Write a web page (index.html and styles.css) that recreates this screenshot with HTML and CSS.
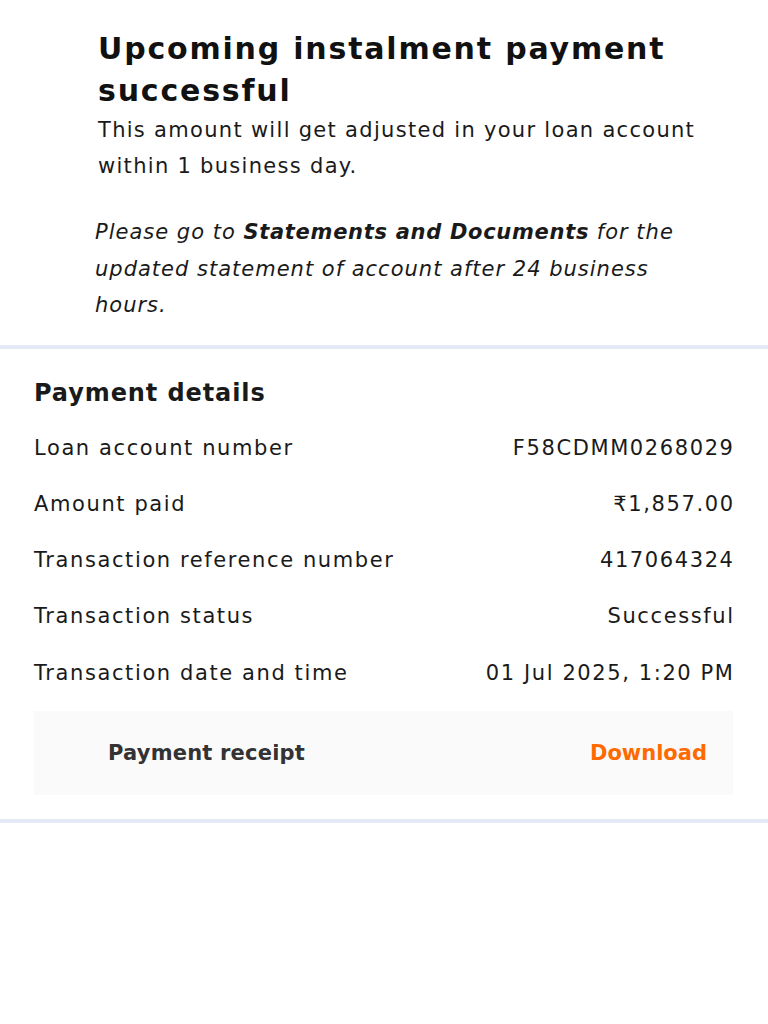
FILE: index.html
```html
<!DOCTYPE html>
<html>
<head>
<meta charset="utf-8">
<link rel="stylesheet" href="styles.css">
</head>
<body>
<section class="top">
  <h1 class="title">Upcoming instalment payment successful</h1>
  <p class="sub">This amount will get adjusted in your loan account within 1 business day.</p>
  <p class="note">Please go to <b>Statements and Documents</b> for the updated statement of account after 24 business hours.</p>
</section>
<div class="divider"></div>
<section class="details">
  <h2 class="heading">Payment details</h2>
  <div class="row"><span>Loan account number</span><span>F58CDMM0268029</span></div>
  <div class="row"><span>Amount paid</span><span>₹1,857.00</span></div>
  <div class="row"><span>Transaction reference number</span><span>417064324</span></div>
  <div class="row"><span>Transaction status</span><span>Successful</span></div>
  <div class="row"><span>Transaction date and time</span><span>01 Jul 2025, 1:20 PM</span></div>
  <div class="receipt"><span class="rlabel">Payment receipt</span><span class="dl">Download</span></div>
</section>
<div class="divider"></div>
</body>
</html>
```
FILE: styles.css
```css
html, body { margin: 0; padding: 0; background: #fff; }
body { font-family: "DejaVu Sans", Inter, sans-serif; color: #1a1a1a; width: 768px; }
.top { padding: 28px 50px 21px 95px; }
.title { margin: 0 0 0 3px; font-size: 30px; line-height: 42px; font-weight: 700; letter-spacing: 1.8px; color: #111; }
.sub { margin: 0 0 0 3px; font-size: 21px; line-height: 36px; letter-spacing: 1.3px; color: #1a1a1a; }
.note { margin: 30px 0 0 0; font-size: 21px; line-height: 36.5px; font-style: italic; letter-spacing: 1px; color: #1a1a1a; }
.note b { font-weight: 700; letter-spacing: 0.7px; }
.divider { height: 4px; background: #e4e9f5; }
.details { padding: 24px 35px 24px 34px; }
.heading { margin: 0 0 7px 0; font-size: 24px; line-height: 40px; font-weight: 700; letter-spacing: 0.9px; color: #1a1a1a; }
.row { display: flex; justify-content: space-between; font-size: 21px; line-height: 56.3px; letter-spacing: 1.6px; color: #1a1a1a; }
.row span:last-child { margin-right: -1.6px; }
.receipt { margin-top: 10px; background: #fafafa; height: 84px; display: flex; justify-content: space-between; align-items: center; padding: 0 26px 0 74px; }
.rlabel { font-size: 21px; font-weight: 700; letter-spacing: 0.2px; color: #333; }
.dl { font-size: 21px; font-weight: 700; color: #ff6a00; }
```
